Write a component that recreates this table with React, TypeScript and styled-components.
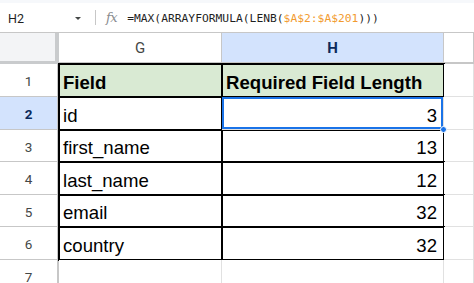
import React from "react";
import styled, { createGlobalStyle, css } from "styled-components";

const GlobalStyle = createGlobalStyle`
  html, body {
    margin: 0;
    padding: 0;
    background: #fff;
    overflow: hidden;
  }
  * {
    box-sizing: border-box;
  }
`;

const Page = styled.div`
  width: 474px;
  height: 283px;
  overflow: hidden;
  font-family: Roboto, "Liberation Sans", sans-serif;
`;

const FormulaBar = styled.header`
  height: 33px;
  display: flex;
  align-items: center;
  border-bottom: 1px solid #c7c7c7;
  border-top: 3px solid #f6f8fb;
  background: #fff;
`;

const NameBox = styled.div`
  width: 95px;
  display: flex;
  align-items: center;
  justify-content: space-between;
  padding: 1px 14px 0 8px;
  font-size: 12.5px;
  color: #1f1f1f;
`;

const Caret = styled.span`
  width: 0;
  height: 0;
  border-left: 3.5px solid transparent;
  border-right: 3.5px solid transparent;
  border-top: 3.5px solid #444746;
`;

const Divider = styled.span`
  width: 1px;
  height: 15px;
  background: #c7c7c7;
`;

const Fx = styled.span`
  margin: 0 10px 0 10px;
  font-family: "DejaVu Serif", "Liberation Serif", serif;
  font-style: italic;
  font-size: 13px;
  color: #8a8d90;
  letter-spacing: -0.5px;
`;

const Formula = styled.code`
  font-family: "DejaVu Sans Mono", "Liberation Mono", monospace;
  font-size: 11.3px;
  color: #1f1f1f;
  padding-top: 1px;
`;

const Range = styled.span`
  color: #f29b2f;
`;

const Sheet = styled.div`
  display: grid;
  grid-template-columns: 59px 163px 222px 1fr;
  grid-template-rows: 31px 33px 33px 32px 33px 32px 33px 33px;
`;

const Corner = styled.div`
  background: #f3f4f6;
  border-right: 4px solid #c9cbcd;
  border-bottom: 3px solid #c9cbcd;
`;

const ColHead = styled.div<{ $active?: boolean }>`
  display: flex;
  align-items: center;
  justify-content: center;
  font-size: 15px;
  color: #444746;
  background: ${(p) => (p.$active ? "#d3e3fd" : "#fff")};
  border-right: 1px solid #c7c7c7;
  border-bottom: 2px solid #c7c7c7;
  ${(p) =>
    p.$active &&
    css`
      font-weight: 700;
      color: #0b2a5b;
    `}
`;

const RowHead = styled.div<{ $active?: boolean }>`
  display: flex;
  align-items: center;
  justify-content: center;
  padding-top: 2px;
  font-size: 13.5px;
  color: #444746;
  background: ${(p) => (p.$active ? "#d3e3fd" : "#fff")};
  border-right: 2px solid #c7c7c7;
  border-bottom: 1px solid #c7c7c7;
  ${(p) =>
    p.$active &&
    css`
      font-weight: 700;
      color: #0b2a5b;
    `}
`;

const Cell = styled.div<{
  $boxed?: boolean;
  $head?: boolean;
  $num?: boolean;
  $selected?: boolean;
}>`
  position: relative;
  display: flex;
  align-items: flex-end;
  justify-content: ${(p) => (p.$num ? "flex-end" : "flex-start")};
  padding: 0 6px 3px 4px;
  font-family: "Liberation Sans", Arial, sans-serif;
  font-size: 18.6px;
  line-height: 20px;
  color: #000;
  background: ${(p) => (p.$head ? "#d9ead3" : "#fff")};
  font-weight: ${(p) => (p.$head ? 700 : 400)};
  border-right: 1px solid #e1e1e1;
  border-bottom: 1px solid #e1e1e1;
  ${(p) =>
    p.$boxed &&
    css`
      outline: 2px solid #000;
      outline-offset: -1px;
    `}
  ${(p) =>
    p.$selected &&
    css`
      outline: none;
      z-index: 2;
      box-shadow: inset 0 0 0 2px #1a73e8;
    `}
`;

const FillHandle = styled.span`
  position: absolute;
  right: -4px;
  bottom: -4px;
  width: 7px;
  height: 7px;
  border-radius: 50%;
  background: #1a73e8;
  border: 1px solid #fff;
  z-index: 3;
`;

const rows = [
  { field: "id", len: 3 },
  { field: "first_name", len: 13 },
  { field: "last_name", len: 12 },
  { field: "email", len: 32 },
  { field: "country", len: 32 },
];

const App = () => {
  return (
    <Page>
      <GlobalStyle />
      <FormulaBar>
        <NameBox>
          H2
          <Caret />
        </NameBox>
        <Divider />
        <Fx>fx</Fx>
        <Formula>
          =MAX(ARRAYFORMULA(LENB(<Range>$A$2:$A$201</Range>)))
        </Formula>
      </FormulaBar>
      <Sheet>
        <Corner />
        <ColHead>G</ColHead>
        <ColHead $active>H</ColHead>
        <ColHead />

        <RowHead>1</RowHead>
        <Cell $boxed $head>
          Field
        </Cell>
        <Cell $boxed $head>
          Required Field Length
        </Cell>
        <Cell />

        {rows.map((r, i) => {
          const selected = i === 0;
          return (
            <React.Fragment key={r.field}>
              <RowHead $active={selected}>{i + 2}</RowHead>
              <Cell $boxed>{r.field}</Cell>
              <Cell $boxed $num $selected={selected}>
                {r.len}
                {selected && <FillHandle />}
              </Cell>
              <Cell />
            </React.Fragment>
          );
        })}

        <RowHead>7</RowHead>
        <Cell />
        <Cell />
        <Cell />
      </Sheet>
    </Page>
  );
};

export default App;
